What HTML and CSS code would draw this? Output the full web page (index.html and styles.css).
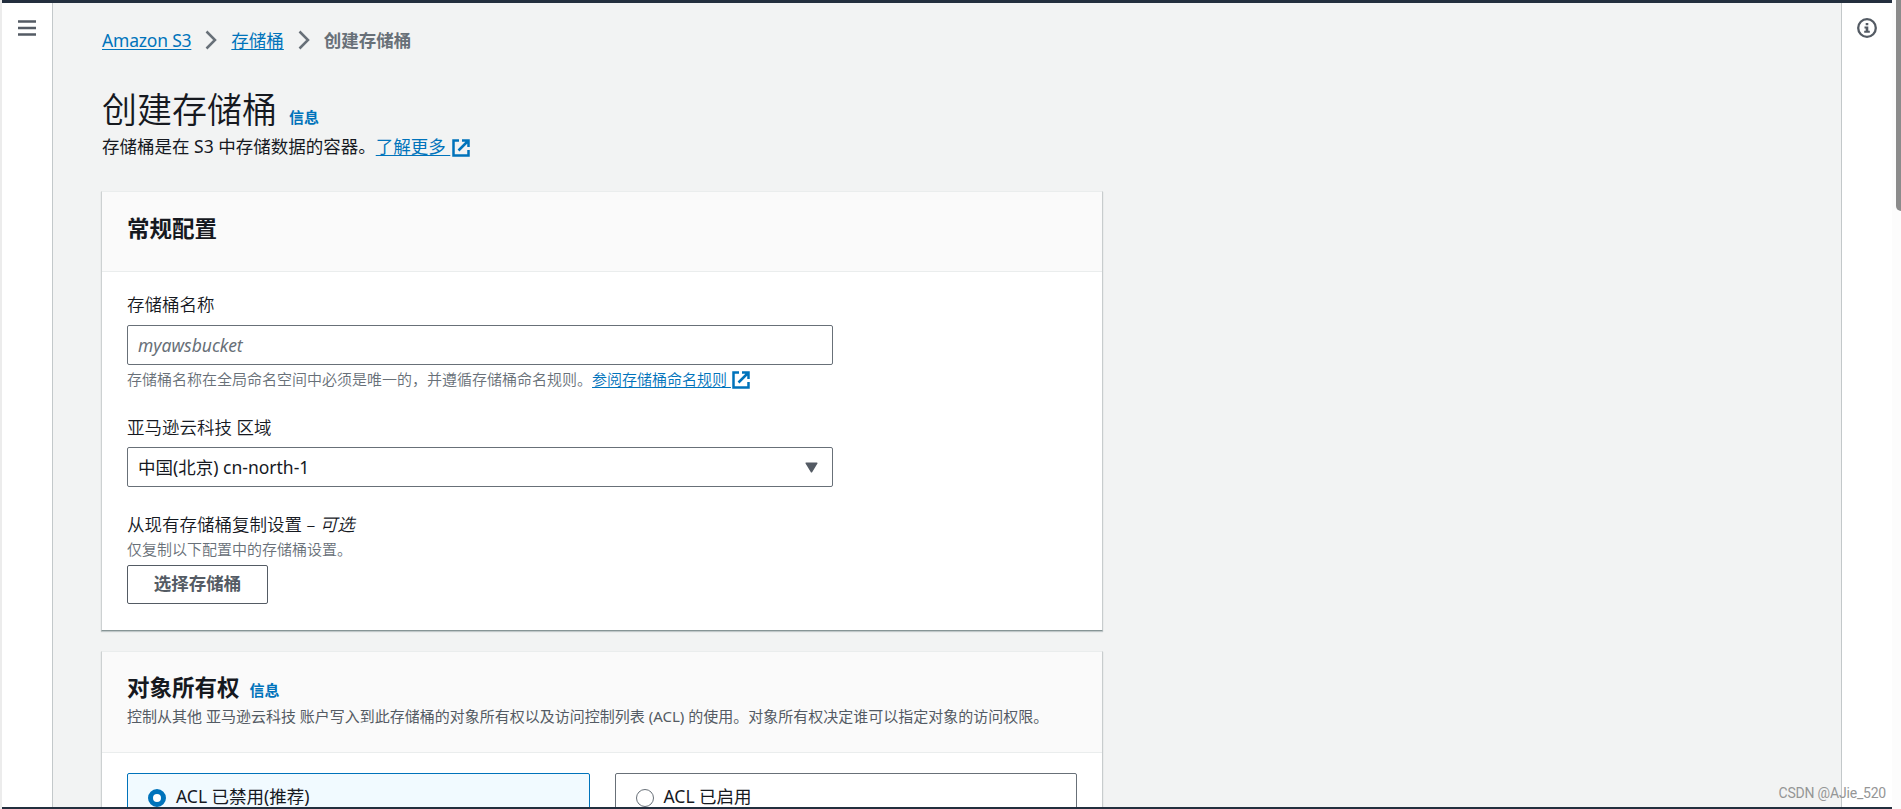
FILE: index.html
```html
<!DOCTYPE html>
<html lang="zh-CN">
<head>
  <meta charset="UTF-8">
  <meta name="viewport" content="width=device-width, initial-scale=1.0">
  <title>创建存储桶</title>
  <link rel="stylesheet" href="styles.css">
</head>
<body>
  <div class="window">
    <div class="app">
      <aside class="rail rail-left">
        <svg class="menu-icon" viewBox="0 0 18 16" width="18" height="16">
          <path d="M0 1.5h18M0 8h18M0 14.5h18" fill="none" stroke="#545b64" stroke-width="2.3"/>
        </svg>
      </aside>

      <main class="content">
        <nav class="breadcrumb">
          <a class="latin" href="#">Amazon S3</a>
          <svg class="chevron" viewBox="0 0 12 20" width="12" height="20"><path d="M1.5 1.5L10 10l-8.500 8.500" fill="none" stroke="#687078" stroke-width="2.500"/></svg>
          <a href="#">存储桶</a>
          <svg class="chevron" viewBox="0 0 12 20" width="12" height="20"><path d="M1.5 1.5L10 10l-8.500 8.500" fill="none" stroke="#687078" stroke-width="2.500"/></svg>
          <span class="current">创建存储桶</span>
        </nav>

        <header class="page-header">
          <h1>创建存储桶</h1>
          <a class="info" href="#">信息</a>
        </header>
        <p class="page-desc">存储桶是在 S3 中存储数据的容器。<a class="external" href="#">了解更多 </a><svg class="ext-icon" viewBox="0 0 18 18" width="18" height="18"><path d="M7 1.500H1.500v15h15V11M10 1.500h6.500V8M16 2L6.500 11.500" fill="none" stroke="#0073bb" stroke-width="2.500"/></svg></p>

        <section class="card">
          <div class="card-header">
            <h2>常规配置</h2>
          </div>
          <div class="card-body">
            <label class="label" for="bucket">存储桶名称</label>
            <input class="input" type="text" id="bucket" placeholder="myawsbucket">
            <p class="hint hint-name">存储桶名称在全局命名空间中必须是唯一的，并遵循存储桶命名规则。<a href="#">参阅存储桶命名规则 </a><svg class="ext-icon" viewBox="0 0 18 18" width="18" height="18"><path d="M7 1.500H1.500v15h15V11M10 1.500h6.500V8M16 2L6.500 11.500" fill="none" stroke="#0073bb" stroke-width="2.500"/></svg></p>

            <span class="label">亚马逊云科技 区域</span>
            <div class="select">
              <span>中国(北京) cn-north-1</span>
              <svg viewBox="0 0 13 11" width="13" height="11"><path d="M1.2 1.200h10.600L6.500 9.800z" fill="#545b64" stroke="#545b64" stroke-width="1.500" stroke-linejoin="round"/></svg>
            </div>

            <span class="label">从现有存储桶复制设置 – <i>可选</i></span>
            <p class="hint hint-copy">仅复制以下配置中的存储桶设置。</p>
            <button class="button" type="button">选择存储桶</button>
          </div>
        </section>

        <section class="card">
          <div class="card-header card-header-tall">
            <div class="heading">
              <h2>对象所有权</h2>
              <a class="info" href="#">信息</a>
            </div>
            <p class="card-desc">控制从其他 亚马逊云科技 账户写入到此存储桶的对象所有权以及访问控制列表 (ACL) 的使用。对象所有权决定谁可以指定对象的访问权限。</p>
          </div>
          <div class="tiles">
            <div class="tile selected">
              <span class="radio"></span>
              <span>ACL 已禁用(推荐)</span>
            </div>
            <div class="tile">
              <span class="radio"></span>
              <span>ACL 已启用</span>
            </div>
          </div>
        </section>
      </main>

      <aside class="rail rail-right">
        <svg class="info-icon" viewBox="0 0 20 20" width="20" height="20">
          <circle cx="10" cy="10" r="8.800" fill="none" stroke="#545b64" stroke-width="2.300"/>
          <path d="M8.700 5h2.600v2.300H8.700zM7.500 8.500h3.800v4.200h1.500v2H7.200v-2h1.500v-2.200H7.500z" fill="#545b64"/>
        </svg>
      </aside>
    </div>
    <div class="scrollbar"><div class="thumb"></div></div>
    <div class="watermark">CSDN @AJie_520</div>
  </div>
</body>
</html>
```

FILE: styles.css
```css
* {
  box-sizing: border-box;
}

body {
  margin: 0;
  background: #ececec;
  color: #16191f;
  font-family: "Noto Sans", "Noto Sans CJK SC", sans-serif;
  font-size: 17.5px;
  line-height: 28px;
  overflow: hidden;
}

h1, h2, p {
  margin: 0;
}

a {
  color: #0073bb;
  text-decoration: underline;
  text-decoration-thickness: 1px;
  text-underline-offset: 2px;
}

/* Frame */
.window {
  display: flex;
  position: relative;
  height: 809px;
  padding-left: 2px;
}

.app {
  display: flex;
  flex: 1;
  height: 809px;
  border-top: 3px solid #232f3e;
  border-bottom: 2px solid #232f3e;
  background: #f2f3f3;
  overflow: hidden;
}

.rail {
  flex: none;
  width: 51px;
  background: #fff;
}

.rail-left {
  border-right: 1px solid #c3c8ca;
  padding: 17px 0 0 16px;
}

.rail-right {
  border-left: 1px solid #c3c8ca;
  padding: 15px 0 0 15px;
}

.rail svg {
  display: block;
}

.scrollbar {
  width: 9px;
  padding-left: 4px;
  background: #fcfcfc;
}

.thumb {
  height: 211px;
  background: #8b8b8b;
  border-bottom-left-radius: 5px;
}

.watermark {
  position: absolute;
  right: 15px;
  bottom: 5px;
  color: #959696;
  font-family: Roboto, sans-serif;
  font-size: 14px;
  line-height: 22px;
  letter-spacing: -0.2px;
}

/* Page header */
.content {
  flex: 1;
  padding: 23px 0 0 48px;
}

.breadcrumb,
.page-header,
.page-desc {
  margin-left: 1px;
}

.breadcrumb {
  display: flex;
  align-items: center;
  height: 28px;
}

.latin {
  letter-spacing: -0.2px;
}

.chevron {
  margin: 0 14px;
}

.current {
  color: #687078;
  font-weight: bold;
}

.page-header {
  display: flex;
  align-items: baseline;
  height: 44px;
  margin-top: 34px;
}

h1 {
  font-size: 35px;
  font-weight: 350;
  line-height: 44px;
}

.info {
  margin-left: 12px;
  font-size: 15px;
  font-weight: bold;
  text-decoration: none;
}

.page-desc {
  height: 28px;
}

.ext-icon {
  display: inline-block;
  margin-left: 2px;
  vertical-align: -4px;
}

/* Cards */
.card {
  width: 1002px;
  margin-top: 31px;
  background: #fff;
  border: 1px solid #eaeded;
  border-left-color: #cdd1d2;
  border-right-color: #c8cccd;
  border-bottom-color: #879596;
  box-shadow: 0 1px 1px rgba(0, 28, 36, 0.2);
}

.card + .card {
  margin-top: 20px;
}

.card-header {
  height: 80px;
  padding: 21px 25px;
  background: #fafafa;
  border-bottom: 1px solid #eaeded;
}

.card-header-tall {
  height: 101px;
  padding-top: 20px;
}

h2 {
  font-size: 22.5px;
  line-height: 32px;
}

.heading {
  display: flex;
  align-items: baseline;
  height: 32px;
}

.heading .info {
  margin-left: 10px;
}

.card-desc {
  color: #545b64;
  font-size: 15px;
  line-height: 24px;
  white-space: nowrap;
}

.card-body {
  height: 358px;
  padding: 18px 25px;
}

/* Form */
.label {
  display: block;
  height: 28px;
  font-weight: 350;
}

.input,
.select {
  display: flex;
  align-items: center;
  justify-content: space-between;
  width: 706px;
  height: 40px;
  margin-top: 7px;
  padding: 0 14px 0 10px;
  background: #fff;
  border: 1px solid #687078;
  border-radius: 2px;
  font: inherit;
}

.select {
  margin: 6px 0 23px;
}

.input::placeholder {
  color: #687078;
  font-style: italic;
  opacity: 1;
}

.hint {
  color: #687078;
  font-size: 15px;
  font-weight: 350;
  line-height: 24px;
}

.hint-name {
  height: 28px;
  margin: 2px 0 18px;
}

.hint .ext-icon {
  margin-left: 1px;
}

.hint-copy {
  height: 27px;
  line-height: 22px;
}

.button {
  display: block;
  width: 141px;
  height: 39px;
  padding: 0 0 3px;
  background: #fff;
  border: 1px solid #545b64;
  border-radius: 2px;
  color: #545b64;
  font: inherit;
  font-weight: bold;
}

/* Ownership options */
.tiles {
  display: grid;
  grid-template-columns: 1fr 1fr;
  gap: 25px;
  padding: 20px 25px;
}

.tile {
  display: flex;
  gap: 10px;
  height: 120px;
  padding: 8px 20px;
  border: 1px solid #687078;
  border-radius: 2px;
}

.tile.selected {
  background: #f1faff;
  border-color: #0073bb;
}

.radio {
  width: 18px;
  height: 18px;
  margin-top: 7px;
  background: #fff;
  border: 1px solid #687078;
  border-radius: 50%;
}

.selected .radio {
  border: 5px solid #0073bb;
}
```
